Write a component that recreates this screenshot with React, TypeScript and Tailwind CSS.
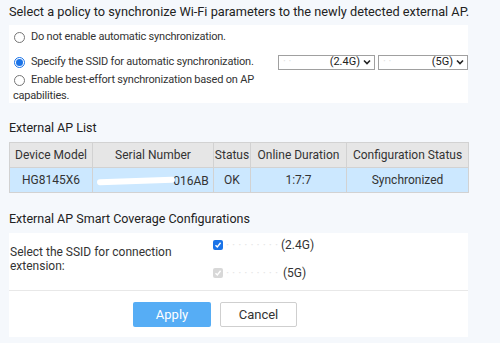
import React from "react";

function Radio({ checked }: { checked?: boolean }) {
  return checked ? (
    <span className="inline-flex h-[11px] w-[11px] shrink-0 items-center justify-center rounded-full border border-[#1a73e8] bg-white">
      <span className="h-[7px] w-[7px] rounded-full bg-[#1a73e8]" />
    </span>
  ) : (
    <span className="inline-block h-[11px] w-[11px] shrink-0 rounded-full border border-[#767676] bg-white" />
  );
}

function Select({ label, width }: { label: string; width: string }) {
  return (
    <div className={`flex h-[15px] items-center justify-end gap-[3px] border border-[#a0a0a0] bg-white pr-[3px] text-[11px] text-[#222] ${width}`}>
      <span className="mr-auto pl-1 text-[#ddd]">· ·</span>
      <span>{label}</span>
      <svg width="8" height="6" viewBox="0 0 8 6">
        <path d="M1 1.5 L4 4.5 L7 1.5" fill="none" stroke="#222" strokeWidth="1.6" />
      </svg>
    </div>
  );
}

function Check({ on }: { on?: boolean }) {
  return (
    <span className={`flex h-[10px] w-[10px] shrink-0 items-center justify-center rounded-[2px] ${on ? "bg-[#1a73e8]" : "bg-[#d8d8d8]"}`}>
      <svg width="8" height="8" viewBox="0 0 8 8">
        <path d="M1.5 4.2 L3.3 6 L6.6 1.8" fill="none" stroke="white" strokeWidth="1.4" />
      </svg>
    </span>
  );
}

export default function App() {
  const font = { fontFamily: 'Roboto, "Noto Sans", sans-serif' };
  return (
    <div className="h-[343px] w-[500px] overflow-hidden bg-[#f5f8fc] text-[#333]" style={font}>
      <div className="whitespace-nowrap pl-[9px] pt-[3px] text-[12.75px] leading-[18px] text-[#222]">
        Select a policy to synchronize Wi-Fi parameters to the newly detected external AP.
      </div>

      {/* policy options */}
      <div className="ml-[9px] mt-[4px] h-[78px] w-[459px] bg-white pt-[3px] text-[11px] tracking-[-0.2px]">
        <div className="flex h-[18px] items-center gap-[6px] pl-[5px]">
          <Radio />
          <span>Do not enable automatic synchronization.</span>
        </div>
        <div className="mt-[7px] flex h-[18px] items-center">
          <div className="flex w-[270px] items-center gap-[6px] whitespace-nowrap pl-[5px]">
            <Radio checked />
            <span>Specify the SSID for automatic synchronization.</span>
          </div>
          <div className="flex gap-[3px] tracking-normal">
            <Select label="(2.4G)" width="w-[97px]" />
            <Select label="(5G)" width="w-[90px]" />
          </div>
        </div>
        <div className="mt-[1px] pl-[4px] leading-[16px]">
          <div className="flex items-center gap-[6px] pl-[1px]">
            <Radio />
            <span>Enable best-effort synchronization based on AP</span>
          </div>
          <div>capabilities.</div>
        </div>
      </div>

      <div className="mt-[17px] pl-[9px] text-[12.5px] leading-[16px] text-[#222]">External AP List</div>

      <table className="ml-[9px] mt-[6px] w-[460px] border-collapse text-center text-[12px] text-[#333]">
        <thead>
          <tr className="h-[25px] bg-[#e6e6e6]">
            <th className="w-[83px] border border-[#d2d2d2] font-normal">Device Model</th>
            <th className="w-[121px] border border-[#d2d2d2] font-normal">Serial Number</th>
            <th className="w-[37px] border border-[#d2d2d2] font-normal">Status</th>
            <th className="w-[96px] border border-[#d2d2d2] font-normal">Online Duration</th>
            <th className="border border-[#d2d2d2] font-normal">Configuration Status</th>
          </tr>
        </thead>
        <tbody>
          <tr className="h-[25px] bg-[#cce8ff]">
            <td className="border border-[#d2d2d2]">HG8145X6</td>
            <td className="border border-[#d2d2d2]">
              <span className="inline-flex items-center">
                <span className="mr-[-2px] h-[6px] w-[78px] -rotate-2 rounded-full bg-white" />
                <span>016AB</span>
              </span>
            </td>
            <td className="border border-[#d2d2d2]">OK</td>
            <td className="border border-[#d2d2d2]">1:7:7</td>
            <td className="border border-[#d2d2d2]">Synchronized</td>
          </tr>
        </tbody>
      </table>

      <div className="mt-[18px] pl-[9px] text-[12.5px] leading-[16px] text-[#222]">
        External AP Smart Coverage Configurations
      </div>

      {/* SSID selection */}
      <div className="ml-[9px] mt-[6px] w-[459px] bg-white text-[12px]">
        <div className="flex h-[58px] border-b border-[#e8e8e8]">
          <div className="w-[204px] pl-[1px] pt-[12px] leading-[14px]">
            Select the SSID for connection extension:
          </div>
          <div className="flex flex-col pt-[4px]">
            <div className="flex h-[15px] items-center gap-[3px]">
              <Check on />
              <span className="w-[52px] overflow-hidden whitespace-nowrap text-[#e6e6e6]">· · · · · · · · ·</span>
              <span>(2.4G)</span>
            </div>
            <div className="mt-[13px] flex h-[15px] items-center gap-[3px]">
              <Check />
              <span className="w-[54px] overflow-hidden whitespace-nowrap text-[#e6e6e6]">· · · · · · · · ·</span>
              <span>(5G)</span>
            </div>
          </div>
        </div>
        <div className="flex h-[46px] items-start gap-[9px] pl-[124px] pt-[11px]">
          <button className="h-[25px] w-[78px] rounded-[2px] bg-[#56adf5] text-[13px] text-white">Apply</button>
          <button className="h-[25px] w-[77px] rounded-[2px] border border-[#cfcfcf] bg-white text-[13px] text-[#333]">
            Cancel
          </button>
        </div>
      </div>
    </div>
  );
}
